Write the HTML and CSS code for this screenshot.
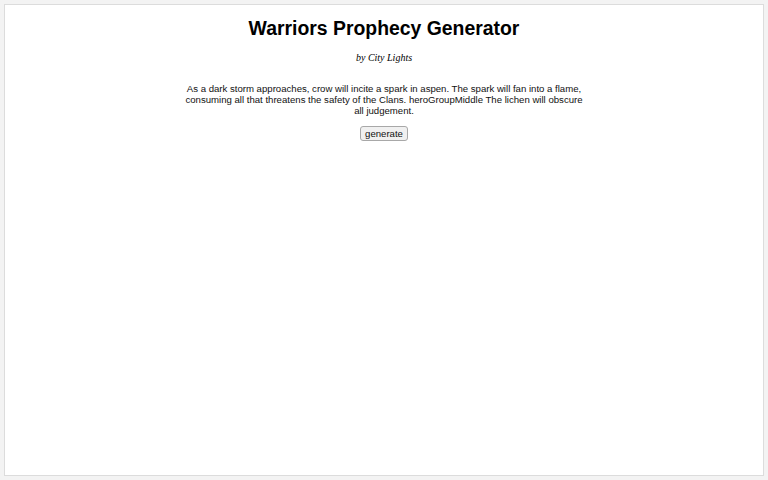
FILE: index.html
```html
<!DOCTYPE html>
<html lang="en">
<head>
    <meta charset="UTF-8">
    <meta name="viewport" content="width=device-width, initial-scale=1.0">
    <title>Warriors Prophecy Generator</title>
    <link rel="stylesheet" href="styles.css">
</head>
<body>
    <div class="container">
        <h1 class="title">Warriors Prophecy Generator</h1>
        <p class="byline">by City Lights</p>
        <p class="prophecy" id="prophecy">As a dark storm approaches, crow will incite a spark in aspen. The spark will fan into a flame, consuming all that threatens the safety of the Clans. heroGroupMiddle The lichen will obscure all judgement.</p>
        <button class="generate" id="generate">generate</button>
    </div>
</body>
</html>
```

FILE: styles.css
```css
html, body {
    height: 100%;
}

body {
    margin: 0;
    padding: 4px;
    box-sizing: border-box;
    background-color: #f3f3f3;
    font-family: "Liberation Sans", Arial, sans-serif;
}

.container {
    height: 100%;
    box-sizing: border-box;
    background-color: #fff;
    border: 1px solid #dcdcdc;
    text-align: center;
    padding-top: 12px;
}

.title {
    font-size: 19.4px;
    font-weight: bold;
    margin: 0;
    color: #000;
}

.byline {
    font-family: "Liberation Serif", "Times New Roman", serif;
    font-style: italic;
    font-size: 10px;
    margin: 12px 0 0;
}

.prophecy {
    width: 400px;
    margin: 20px auto 0;
    font-size: 9.6px;
    line-height: 11px;
    color: #111;
}

.generate {
    margin-top: 10px;
    font-family: "Liberation Sans", Arial, sans-serif;
    font-size: 9.6px;
    padding: 1px 4px;
    background-color: #f0f0f0;
    border: 1px solid #a8a8a8;
    border-radius: 3px;
    color: #111;
}
```
